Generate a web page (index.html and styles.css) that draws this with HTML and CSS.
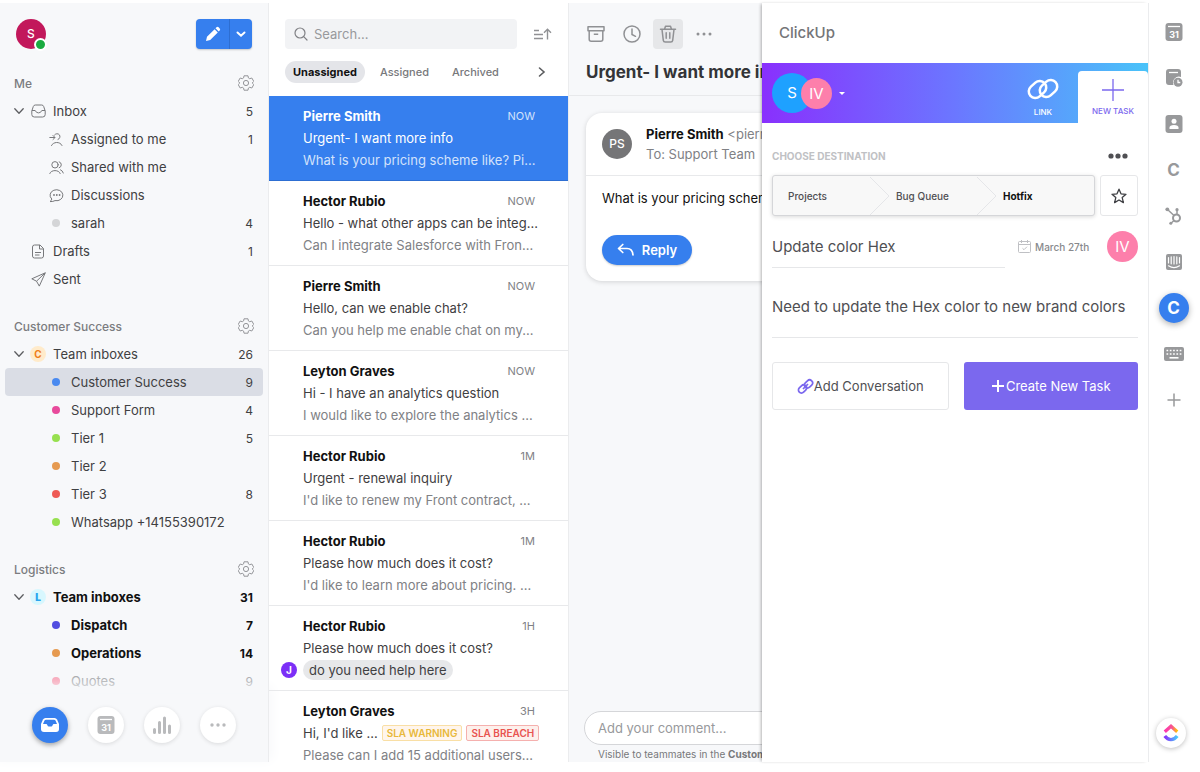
FILE: index.html
```html
<!DOCTYPE html>
<html lang="en">
<head>
    <meta charset="UTF-8">
    <meta name="viewport" content="width=device-width, initial-scale=1.0">
    <title>Customer Success - Inbox</title>
    <link rel="stylesheet" href="styles.css">
</head>
<body>
    <!-- Shared icons -->
    <svg class="sprite" aria-hidden="true">
        <symbol id="gear" viewBox="0 0 16 16">
            <path d="M6 .8h4l.4 2.100 1.300.8 2.100-.7 2 3.400L14.200 8l1.600 1.600-2 3.400-2.100-.7-1.300.8-.4 2.100H6l-.4-2.100-1.300-.8-2.100.7-2-3.400L1.800 8 .2 6.400l2-3.400 2.100.7 1.300-.8z" fill="none" stroke="currentColor" stroke-linejoin="round"/>
            <circle cx="8" cy="8" r="2.600" fill="none" stroke="currentColor"/>
        </symbol>
        <symbol id="chevron" viewBox="0 0 10 10">
            <path d="M.8 2.800L5 7.200l4.200-4.400" fill="none" stroke="currentColor" stroke-width="1.300" stroke-linecap="round" stroke-linejoin="round"/>
        </symbol>
        <symbol id="calendar" viewBox="0 0 18 18">
            <rect x="0.500" y="0" width="17" height="18" rx="3" fill="currentColor"/>
            <path d="M3 3.500h12" stroke="#fff" stroke-width="1.300"/>
            <text x="9" y="14.500" text-anchor="middle" fill="#fff" font-size="9" font-weight="700">31</text>
        </symbol>
    </svg>

    <div class="app">
        <aside class="sidebar">
            <div class="sidebar-top">
                <div class="user">S<span class="status"></span></div>
                <div class="compose">
                    <button type="button" class="compose-new" aria-label="Compose">
                        <svg width="16" height="16" viewBox="0 0 16 16"><path d="M1 15l1-4.200 7.600-7.600 3.200 3.200L5.200 14zM10.500 2.300l1-1a1.500 1.500 0 0 1 2.100 0l1.100 1.100a1.500 1.500 0 0 1 0 2.100l-1 1z" fill="#fff"/></svg>
                    </button>
                    <button type="button" class="compose-more" aria-label="More compose options">
                        <svg width="10" height="10" viewBox="0 0 10 10"><path d="M1.500 3.500L5 6.700l3.500-3.200" fill="none" stroke="#fff" stroke-width="2" stroke-linecap="round"/></svg>
                    </button>
                </div>
            </div>

            <nav class="nav">
                <section class="nav-section">
                    <div class="nav-title">Me <button type="button" aria-label="Settings"><svg width="16" height="16"><use href="#gear"/></svg></button></div>
                    <a class="row" href="#">
                        <svg class="chevron" width="10" height="10"><use href="#chevron"/></svg>
                        <span class="icon"><svg width="15" height="14" viewBox="0 0 15 14" fill="none" stroke="currentColor"><path d="M.8 7L2.300 2.500Q2.800 1 4.300 1h6.400q1.500 0 2 1.500L14.200 7v3.500q0 2.500-2.500 2.500H3.300Q.8 13 .8 10.500zM1 6.500h3.200l1.300 1.800q2 1.200 4 0l1.300-1.800H14"/></svg></span>
                        <span class="label">Inbox</span><span class="count">5</span>
                    </a>
                    <a class="row sub" href="#">
                        <span class="icon"><svg width="15" height="15" viewBox="0 0 15 15" fill="none" stroke="currentColor" stroke-linecap="round"><path d="M5.500 3A3 3 0 1 1 9 7.500M.8 5.500h5M4 3.500l2 2-2 2M2.500 13.500C4 9.800 11 9 13 13.500"/></svg></span>
                        <span class="label">Assigned to me</span><span class="count">1</span>
                    </a>
                    <a class="row sub" href="#">
                        <span class="icon"><svg width="15" height="15" viewBox="0 0 15 15" fill="none" stroke="currentColor" stroke-linecap="round"><circle cx="6" cy="4.800" r="3.200"/><path d="M.8 13.500C2 9.500 10 9.500 11.200 13.500M10.200 1.800a3.200 3.200 0 0 1 0 6M11.500 9.800q2.200.8 2.800 3.200"/></svg></span>
                        <span class="label">Shared with me</span>
                    </a>
                    <a class="row sub" href="#">
                        <span class="icon"><svg width="15" height="15" viewBox="0 0 15 15"><path d="M2.800 11A6.400 5.500 0 1 1 6 12.600Q4 13.800 1 13.600 2.600 12.500 2.800 11z" fill="none" stroke="currentColor" stroke-linejoin="round"/><g fill="currentColor"><circle cx="5" cy="7" r=".9"/><circle cx="7.800" cy="7" r=".9"/><circle cx="10.600" cy="7" r=".9"/></g></svg></span>
                        <span class="label">Discussions</span>
                    </a>
                    <a class="row sub" href="#"><span class="icon"><i class="dot gray"></i></span><span class="label">sarah</span><span class="count">4</span></a>
                    <a class="row no-chevron" href="#">
                        <span class="icon"><svg width="14" height="15" viewBox="0 0 14 15" fill="none" stroke="currentColor" stroke-linejoin="round"><path d="M1.500 3q0-2 2-2H9l3.500 3.500V12q0 2-2 2h-7q-2 0-2-2zM8.500 1v4h4M4 8.500h6M4 11h4.500"/></svg></span>
                        <span class="label">Drafts</span><span class="count">1</span>
                    </a>
                    <a class="row no-chevron" href="#">
                        <span class="icon"><svg width="15" height="15" viewBox="0 0 15 15" fill="none" stroke="currentColor" stroke-linejoin="round"><path d="M14.300.8L.8 6.800l4.700 2.400 2.800 4.900zM14.300.8L5.500 9.200"/></svg></span>
                        <span class="label">Sent</span>
                    </a>
                </section>

                <section class="nav-section">
                    <div class="nav-title">Customer Success <button type="button" aria-label="Settings"><svg width="16" height="16"><use href="#gear"/></svg></button></div>
                    <a class="row" href="#">
                        <svg class="chevron" width="10" height="10"><use href="#chevron"/></svg>
                        <span class="icon"><b class="team orange-team">C</b></span><span class="label">Team inboxes</span><span class="count">26</span>
                    </a>
                    <a class="row sub selected" href="#"><span class="icon"><i class="dot blue"></i></span><span class="label">Customer Success</span><span class="count">9</span></a>
                    <a class="row sub" href="#"><span class="icon"><i class="dot pink"></i></span><span class="label">Support Form</span><span class="count">4</span></a>
                    <a class="row sub" href="#"><span class="icon"><i class="dot green"></i></span><span class="label">Tier 1</span><span class="count">5</span></a>
                    <a class="row sub" href="#"><span class="icon"><i class="dot orange"></i></span><span class="label">Tier 2</span></a>
                    <a class="row sub" href="#"><span class="icon"><i class="dot red"></i></span><span class="label">Tier 3</span><span class="count">8</span></a>
                    <a class="row sub" href="#"><span class="icon"><i class="dot green"></i></span><span class="label">Whatsapp +14155390172</span></a>
                </section>

                <section class="nav-section">
                    <div class="nav-title">Logistics <button type="button" aria-label="Settings"><svg width="16" height="16"><use href="#gear"/></svg></button></div>
                    <a class="row unread" href="#">
                        <svg class="chevron" width="10" height="10"><use href="#chevron"/></svg>
                        <span class="icon"><b class="team cyan-team">L</b></span><span class="label">Team inboxes</span><span class="count">31</span>
                    </a>
                    <a class="row sub unread" href="#"><span class="icon"><i class="dot indigo"></i></span><span class="label">Dispatch</span><span class="count">7</span></a>
                    <a class="row sub unread" href="#"><span class="icon"><i class="dot orange"></i></span><span class="label">Operations</span><span class="count">14</span></a>
                    <a class="row sub faded" href="#"><span class="icon"><i class="dot rose"></i></span><span class="label">Quotes</span><span class="count">9</span></a>
                </section>
            </nav>

            <div class="dock">
                <button type="button" class="active" aria-label="Inbox"><svg width="20" height="16" viewBox="0 0 20 16"><path d="M1 7l2-4.500Q3.800 1 5.500 1h9q1.700 0 2.500 1.500L19 7v5q0 3-3 3H4q-3 0-3-3z" fill="#fff"/><path d="M3 7l1.500-3.500Q5 2.800 6 2.800h8q1 0 1.500.7L17 7h-3.200q-.8 0-1.200 1.300-.4 1.200-1.400 1.200H8.800q-1 0-1.400-1.200Q7 7 6.200 7z" fill="#367fee"/></svg></button>
                <button type="button" aria-label="Calendar"><svg width="18" height="18"><use href="#calendar"/></svg></button>
                <button type="button" aria-label="Analytics"><svg width="20" height="20" viewBox="0 0 20 20" stroke="currentColor" stroke-width="3" stroke-linecap="round"><path d="M2.500 14.500v3M7.500 7.500v10M12.500 3v14.500M17.500 11v6.500"/></svg></button>
                <button type="button" aria-label="More"><svg width="16" height="4" viewBox="0 0 16 4" fill="currentColor"><circle cx="2" cy="2" r="1.700"/><circle cx="8" cy="2" r="1.700"/><circle cx="14" cy="2" r="1.700"/></svg></button>
            </div>
        </aside>

        <section class="list">
            <div class="list-top">
                <div class="search-row">
                    <label class="search">
                        <svg width="14" height="14" viewBox="0 0 14 14" fill="none" stroke="currentColor" stroke-width="1.200" stroke-linecap="round"><circle cx="6" cy="6" r="5"/><path d="M9.700 9.700L13 13"/></svg>
                        <input type="search" placeholder="Search..." aria-label="Search">
                    </label>
                    <button type="button" class="sort" aria-label="Sort"><svg width="18" height="12" viewBox="0 0 18 12" fill="none" stroke="currentColor" stroke-width="1.400"><path d="M0 2.500h5M0 6.500h9M0 10.500h9M13.500 11.500V1.500M10 4.800l3.500-3.500L17 4.800"/></svg></button>
                </div>
                <div class="tabs">
                    <button type="button" class="tab active">Unassigned</button>
                    <button type="button" class="tab">Assigned</button>
                    <button type="button" class="tab">Archived</button>
                    <button type="button" class="next" aria-label="More tabs"><svg width="8" height="12" viewBox="0 0 8 12" fill="none" stroke="currentColor" stroke-width="1.600" stroke-linecap="round"><path d="M1.500 2l4.500 4-4.500 4"/></svg></button>
                </div>
            </div>
            <a class="mail current" href="#">
                <div class="line"><strong>Pierre Smith</strong><time>NOW</time></div>
                <div class="subject">Urgent- I want more info</div>
                <div class="preview">What is your pricing scheme like? Pi...</div>
            </a>
            <a class="mail" href="#">
                <div class="line"><strong>Hector Rubio</strong><time>NOW</time></div>
                <div class="subject">Hello - what other apps can be integ...</div>
                <div class="preview">Can I integrate Salesforce with Fron...</div>
            </a>
            <a class="mail" href="#">
                <div class="line"><strong>Pierre Smith</strong><time>NOW</time></div>
                <div class="subject">Hello, can we enable chat?</div>
                <div class="preview">Can you help me enable chat on my...</div>
            </a>
            <a class="mail" href="#">
                <div class="line"><strong>Leyton Graves</strong><time>NOW</time></div>
                <div class="subject">Hi - I have an analytics question</div>
                <div class="preview">I would like to explore the analytics ...</div>
            </a>
            <a class="mail" href="#">
                <div class="line"><strong>Hector Rubio</strong><time>1M</time></div>
                <div class="subject">Urgent - renewal inquiry</div>
                <div class="preview">I'd like to renew my Front contract, ...</div>
            </a>
            <a class="mail" href="#">
                <div class="line"><strong>Hector Rubio</strong><time>1M</time></div>
                <div class="subject">Please how much does it cost?</div>
                <div class="preview">I'd like to learn more about pricing. ...</div>
            </a>
            <a class="mail" href="#">
                <div class="line"><strong>Hector Rubio</strong><time>1H</time></div>
                <div class="subject">Please how much does it cost?</div>
                <div class="draft"><b class="author">J</b><span class="bubble">do you need help here</span></div>
            </a>
            <a class="mail" href="#">
                <div class="line"><strong>Leyton Graves</strong><time>3H</time></div>
                <div class="subject tagged">Hi, I'd like ... <span class="tag warning">SLA WARNING</span><span class="tag breach">SLA BREACH</span></div>
                <div class="preview">Please can I add 15 additional users...</div>
            </a>
        </section>

        <main class="thread">
            <header class="thread-top">
                <div class="tools">
                    <button type="button" aria-label="Archive"><svg width="18" height="18" viewBox="0 0 18 18" fill="none" stroke="currentColor" stroke-width="1.500" stroke-linejoin="round"><path d="M1 1.800h16v4H1zM2.200 5.800v8.400q0 2 2 2h9.600q2 0 2-2V5.800M6.800 9.300h4.400"/></svg></button>
                    <button type="button" aria-label="Snooze"><svg width="18" height="18" viewBox="0 0 18 18" fill="none" stroke="currentColor" stroke-width="1.500" stroke-linecap="round"><circle cx="9" cy="9" r="8"/><path d="M9 4v5.500l3.500 1.800"/></svg></button>
                    <button type="button" class="active" aria-label="Delete"><svg width="18" height="18" viewBox="0 0 18 18" fill="none" stroke="currentColor" stroke-width="1.500" stroke-linecap="round" stroke-linejoin="round"><path d="M1.500 4.300h15M5.500 4.300l1-3h5l1 3M3 4.500l1.300 10.800q.2 1.700 2 1.700h5.400q1.800 0 2-1.700L15 4.500M7.200 7.800v5.500M10.800 7.800v5.500"/></svg></button>
                    <button type="button" aria-label="More actions"><svg width="16" height="4" viewBox="0 0 16 4" fill="currentColor"><circle cx="2" cy="2" r="1.500"/><circle cx="8" cy="2" r="1.500"/><circle cx="14" cy="2" r="1.500"/></svg></button>
                </div>
                <h1>Urgent- I want more info</h1>
            </header>
            <article class="message">
                <header class="message-top">
                    <div class="sender">PS</div>
                    <div>
                        <div class="from"><strong>Pierre Smith</strong> &lt;pierre</div>
                        <div class="to">To: Support Team</div>
                    </div>
                </header>
                <div class="message-body">
                    <p>What is your pricing scheme</p>
                    <button type="button" class="reply"><svg width="18" height="14" viewBox="0 0 18 14" fill="none" stroke="#fff" stroke-width="1.700" stroke-linecap="round" stroke-linejoin="round"><path d="M5.800 1.500L1.500 5.500l4.300 4M1.800 5.500H10q5.500 0 6 6.500"/></svg>Reply</button>
                </div>
            </article>
            <footer class="comment">
                <input type="text" placeholder="Add your comment..." aria-label="Comment">
                <p>Visible to teammates in the <strong>Customer</strong></p>
            </footer>
        </main>

        <aside class="panel">
            <h2>ClickUp</h2>
            <div class="banner">
                <div class="people"><span class="space">S</span><span class="member">IV</span><i class="caret"></i></div>
                <button type="button" class="link-tab"><svg width="34" height="26" viewBox="0 0 34 26" fill="none" stroke="#fff" stroke-width="2.500"><rect x="2" y="6" width="19" height="13" rx="6.500" transform="rotate(-42 11.500 12.500)"/><rect x="13" y="5" width="19" height="13" rx="6.500" transform="rotate(-42 22.500 11.500)"/></svg>LINK</button>
                <button type="button" class="new-tab"><svg width="24" height="24" viewBox="0 0 24 24" stroke="#7b68ee" stroke-width="1.300"><path d="M12 1v22M1 12h22"/></svg>NEW TASK</button>
            </div>
            <form class="task">
                <div class="dest-title"><span>CHOOSE DESTINATION</span><button type="button" aria-label="Options"><svg width="20" height="6" viewBox="0 0 20 6" fill="#4f4f53"><circle cx="3" cy="3" r="2.600"/><circle cx="10" cy="3" r="2.600"/><circle cx="17" cy="3" r="2.600"/></svg></button></div>
                <div class="dest">
                    <div class="crumbs">
                        <a href="#">Projects</a>
                        <svg width="20" height="38" viewBox="0 0 20 38"><path d="M0 0l19 19L0 38" fill="none" stroke="#e5e6e9"/></svg>
                        <a href="#">Bug Queue</a>
                        <svg width="20" height="38" viewBox="0 0 20 38"><path d="M0 0l19 19L0 38" fill="none" stroke="#e5e6e9"/></svg>
                        <a class="here" href="#">Hotfix</a>
                    </div>
                    <button type="button" class="star" aria-label="Favorite"><svg width="16" height="16" viewBox="0 0 16 16" fill="none" stroke="#3d3e42" stroke-width="1.300" stroke-linejoin="round"><path d="M8 1.200l2 4.600 5 .5-3.800 3.300 1.200 5L8 12l-4.400 2.600 1.200-5L1 6.300l5-.5z"/></svg></button>
                </div>
                <div class="task-row">
                    <input type="text" class="task-name" value="Update color Hex" aria-label="Task name">
                    <div class="due"><svg width="13" height="13" viewBox="0 0 13 13" fill="none" stroke="#bfc0c4"><rect x=".5" y="1.500" width="12" height="11" rx="1"/><path d="M.5 4.500h12M3.500 0v3M9.500 0v3M4.500 8.300L6 9.700l3-3"/></svg>March 27th</div>
                    <span class="member">IV</span>
                </div>
                <input type="text" class="task-text" value="Need to update the Hex color to new brand colors" aria-label="Description">
                <div class="task-actions">
                    <button type="button" class="add"><svg width="17" height="17" viewBox="0 0 17 17" fill="none" stroke="#7b68ee" stroke-width="1.700"><rect x="1" y="8" width="9" height="6" rx="3" transform="rotate(-45 5.500 11)"/><rect x="7" y="3" width="9" height="6" rx="3" transform="rotate(-45 11.500 6)"/><path d="M6 11l5-5"/></svg>Add Conversation</button>
                    <button type="submit" class="create"><svg width="14" height="14" viewBox="0 0 14 14" stroke="#fff" stroke-width="2"><path d="M7 1v12M1 7h12"/></svg>Create New Task</button>
                </div>
            </form>
        </aside>

        <nav class="rail">
            <button type="button" aria-label="Calendar"><svg width="18" height="18"><use href="#calendar"/></svg></button>
            <button type="button" aria-label="Send later"><svg width="18" height="18" viewBox="0 0 18 18"><path d="M4 0h9q3 0 3 3v5a6 6 0 0 0-7.500 8H4q-3 0-3-3V3q0-3 3-3z" fill="currentColor"/><path d="M4 3.500h9" stroke="#fff" stroke-width="1.300"/><circle cx="13" cy="13.300" r="4.500" fill="currentColor"/><path d="M13 10.800v2.700h2.300" stroke="#fff" stroke-width="1.300" fill="none"/></svg></button>
            <button type="button" aria-label="Contacts"><svg width="18" height="18" viewBox="0 0 18 18"><rect x=".5" width="17" height="18" rx="3" fill="currentColor"/><circle cx="9" cy="6.300" r="2.500" fill="#fff"/><path d="M4.500 14v-1.500q0-2.500 4.500-2.500t4.500 2.500V14z" fill="#fff"/></svg></button>
            <button type="button" class="letter">C</button>
            <button type="button" aria-label="HubSpot"><svg width="18" height="18" viewBox="0 0 18 18" fill="none" stroke="currentColor"><circle cx="11.500" cy="11" r="3.500" stroke-width="2"/><path d="M2.500 2.500l6.500 6M12 7.500V3M9 13.500l-3 2.700" stroke-width="1.500"/><g fill="currentColor" stroke="none"><circle cx="2.300" cy="2.300" r="1.900"/><circle cx="12" cy="2.700" r="1.600"/><circle cx="5.800" cy="16.200" r="1.500"/></g></svg></button>
            <button type="button" aria-label="Intercom"><svg width="18" height="18" viewBox="0 0 18 18" fill="none"><rect x="1" y="1" width="16" height="16" rx="2" fill="currentColor"/><path d="M3.500 4.500v5.500M6.200 3.800v7M9 3.500v7.500M11.800 3.800v7M14.500 4.500v5.500M3.500 12.800q5.500 3.500 11 0" stroke="#fff" stroke-width="1.200" stroke-linecap="round"/></svg></button>
            <button type="button" class="letter active">C</button>
            <button type="button" aria-label="Shortcuts"><svg width="20" height="14" viewBox="0 0 20 14"><rect width="20" height="14" rx="2" fill="currentColor"/><path d="M2.500 3.500h15M2.500 7h15" stroke="#fff" stroke-width="1.600" stroke-dasharray="1.700 1.600"/><path d="M5.500 10.800h9" stroke="#fff" stroke-width="1.600"/></svg></button>
            <button type="button" aria-label="Add app"><svg width="14" height="14" viewBox="0 0 14 14" stroke="currentColor" stroke-width="1.500"><path d="M7 .5v13M.5 7h13"/></svg></button>
            <button type="button" class="badge" aria-label="Open ClickUp">
                <svg width="16" height="20" viewBox="0 0 18 22" fill="none" stroke-width="3.800">
                    <defs>
                        <linearGradient id="up"><stop offset="0" stop-color="#fd35b0"/><stop offset=".6" stop-color="#f7568f"/><stop offset="1" stop-color="#ffc800"/></linearGradient>
                        <linearGradient id="down"><stop offset="0" stop-color="#8930fd"/><stop offset="1" stop-color="#49ccf9"/></linearGradient>
                    </defs>
                    <path d="M2 9.500L9 3.500l7 6" stroke="url(#up)"/>
                    <path d="M2 14.500q3 4 7 4t7-4" stroke="url(#down)"/>
                </svg>
            </button>
        </nav>
    </div>
</body>
</html>
```
FILE: styles.css
```css
* {
    box-sizing: border-box;
}
body {
    margin: 0;
    font-family: Inter, "Liberation Sans", sans-serif;
    font-size: 13px;
    color: #3f4042;
    background-color: #fff;
}
button {
    border: none;
    background: none;
    padding: 0;
    font: inherit;
    color: inherit;
    cursor: pointer;
    display: flex;
    align-items: center;
    justify-content: center;
}
input {
    border: none;
    outline: none;
    background: none;
    padding: 0;
    min-width: 0;
    font: inherit;
    color: inherit;
}
a {
    color: inherit;
    text-decoration: none;
}
svg {
    display: block;
    flex-shrink: 0;
}
.sprite {
    position: absolute;
    width: 0;
    height: 0;
}
.app {
    display: flex;
    height: 100vh;
    padding: 3px 0 10px;
    overflow: hidden;
}

/* Sidebar */
.sidebar {
    width: 268px;
    flex-shrink: 0;
    display: flex;
    flex-direction: column;
    background-color: #f7f8fa;
}
.sidebar-top {
    display: flex;
    justify-content: space-between;
    padding: 16px 16px 20px;
}
.user {
    position: relative;
    width: 30px;
    height: 30px;
    line-height: 30px;
    border-radius: 50%;
    background-color: #c2185b;
    color: #fff;
    font-size: 12px;
    font-weight: 500;
    text-align: center;
}
.status {
    position: absolute;
    right: -1px;
    bottom: -2px;
    width: 13px;
    height: 13px;
    border-radius: 50%;
    border: 2px solid #fff;
    background-color: #1aab40;
}
.compose {
    display: flex;
    height: 30px;
    border-radius: 4px;
    background-color: #367fee;
    box-shadow: 0 1px 2px rgba(0, 0, 0, 0.2);
}
.compose-new {
    width: 34px;
    border-right: 1px solid #2d6ed2;
}
.compose-more {
    width: 22px;
}
.nav {
    flex: 1;
    min-height: 0;
    overflow: hidden;
}
.nav-section {
    margin-bottom: 19px;
}
.nav-title {
    display: flex;
    align-items: center;
    justify-content: space-between;
    height: 28px;
    padding: 0 14px;
    font-size: 12px;
    font-weight: 500;
    color: #7b7c7f;
}
.nav-title button {
    color: #949599;
}
.row {
    display: flex;
    align-items: center;
    height: 28px;
    margin: 0 5px;
    padding: 0 10px 0 9px;
    border-radius: 4px;
}
.row .icon {
    display: flex;
    align-items: center;
    justify-content: center;
    width: 16px;
    margin: 0 7px 0 6px;
    color: #77787b;
}
.row .chevron {
    color: #5c5d60;
}
.row .label {
    flex: 1;
}
.row .count {
    font-size: 12px;
}
.row.no-chevron {
    padding-left: 19px;
}
.row.sub {
    padding-left: 37px;
}
.row.selected {
    background-color: #dadde5;
}
.row.unread {
    color: #111;
    font-weight: 700;
}
.row.faded {
    color: #a9aaad;
}
.dot {
    width: 8px;
    height: 8px;
    border-radius: 50%;
}
.gray { background-color: #d4d5d7; }
.blue { background-color: #4a8af0; }
.pink { background-color: #e84a9c; }
.green { background-color: #97e04f; }
.orange { background-color: #e69a50; }
.red { background-color: #ee5a55; }
.indigo { background-color: #524ee0; }
.rose { background-color: #f8a5b8; }
.team {
    width: 16px;
    height: 16px;
    line-height: 16px;
    border-radius: 50%;
    font-size: 10px;
    text-align: center;
}
.orange-team {
    background-color: #ffebcb;
    color: #ef7f1a;
}
.cyan-team {
    background-color: #d8f7fe;
    color: #2ba5ee;
}
.dock {
    display: flex;
    gap: 20px;
    padding: 11px 32px 19px;
    box-shadow: 0 -6px 12px 4px #f7f8fa;
}
.dock button {
    width: 36px;
    height: 36px;
    border-radius: 50%;
    background-color: #fff;
    color: #b9babc;
    box-shadow: 0 1px 4px rgba(0, 0, 0, 0.12);
}
.dock .active {
    background-color: #367fee;
    box-shadow: 0 2px 5px rgba(0, 0, 0, 0.35);
}

/* Conversation list */
.list {
    width: 301px;
    flex-shrink: 0;
    overflow: hidden;
    border: 1px solid #ebecee;
    border-width: 0 1px;
}
.list-top {
    height: 93px;
    padding: 16px 16px 0;
}
.search-row {
    display: flex;
    align-items: center;
    justify-content: space-between;
}
.search {
    display: flex;
    align-items: center;
    gap: 6px;
    width: 232px;
    height: 30px;
    padding: 0 9px;
    border-radius: 4px;
    background-color: #f2f3f5;
    color: #808185;
}
.search input {
    flex: 1;
}
input::placeholder {
    color: #98999c;
    opacity: 1;
}
.sort {
    color: #909194;
}
.tabs {
    display: flex;
    align-items: center;
    gap: 7px;
    margin-top: 12px;
    font-size: 11px;
    font-weight: 500;
    color: #77787b;
}
.tab {
    height: 22px;
    padding: 0 8px;
    border-radius: 11px;
}
.tab.active {
    background-color: #e4e5e9;
    color: #111;
    font-weight: 700;
}
.next {
    margin: 0 6px 0 auto;
    color: #5c5d60;
}
.mail {
    display: block;
    padding: 9px 33px 9px 34px;
    border-bottom: 1px solid #e8e9eb;
    line-height: 22px;
    white-space: nowrap;
}
.mail .line {
    display: flex;
    justify-content: space-between;
}
.mail strong {
    color: #111;
    font-weight: 700;
}
.mail time {
    font-size: 11px;
    color: #808185;
}
.mail .preview {
    color: #808185;
}
.mail.current,
.mail.current strong {
    color: #fff;
}
.mail.current {
    background-color: #367fee;
    border-color: #2d6ed2;
}
.mail.current time,
.mail.current .preview {
    color: #d3e2fb;
}
.draft {
    display: flex;
    align-items: center;
    gap: 6px;
    height: 22px;
    margin-left: -22px;
}
.author {
    width: 16px;
    height: 16px;
    line-height: 16px;
    border-radius: 50%;
    background-color: #7b2ff7;
    color: #fff;
    font-size: 10px;
    text-align: center;
}
.bubble {
    height: 20px;
    line-height: 20px;
    padding: 0 6px;
    border-radius: 10px;
    background-color: #e7e8ea;
}
.tagged {
    display: flex;
    align-items: center;
    gap: 4px;
    margin-right: -4px;
}
.tag {
    height: 16px;
    line-height: 14px;
    padding: 0 4px;
    border: 1px solid;
    border-radius: 2px;
    font-size: 10px;
    font-weight: 600;
}
.warning {
    color: #e8b83a;
    border-color: #f9dfa5;
    background-color: #fff5ec;
}
.breach {
    color: #e85450;
    border-color: #f5b0ae;
    background-color: #fdf0ec;
}

/* Open conversation */
.thread {
    flex: 1;
    min-width: 0;
    display: flex;
    flex-direction: column;
    overflow: hidden;
    white-space: nowrap;
    background-color: #f7f8fa;
}
.thread-top {
    height: 93px;
    padding: 16px 12px 0;
    border-bottom: 1px solid #e8e9eb;
}
.tools {
    display: flex;
    gap: 6px;
    color: #909194;
}
.tools button {
    width: 30px;
    height: 30px;
    border-radius: 4px;
}
.tools .active {
    background-color: #e6e7e9;
}
h1 {
    margin: 10px 5px 0;
    line-height: 26px;
    font-size: 17px;
    font-weight: 700;
    color: #333437;
}
.message {
    min-width: 400px;
    margin: 17px 17px 0;
    border-radius: 16px;
    background-color: #fff;
    box-shadow: 0 1px 5px rgba(0, 0, 0, 0.15);
}
.message-top {
    display: flex;
    align-items: center;
    gap: 14px;
    height: 63px;
    padding: 0 16px;
    border-bottom: 1px solid #e8e9eb;
    line-height: 20px;
    color: #808185;
}
.sender {
    width: 30px;
    height: 30px;
    line-height: 30px;
    border-radius: 50%;
    background-color: #757577;
    color: #fff;
    font-size: 12px;
    font-weight: 500;
    text-align: center;
}
.message-top strong {
    color: #111;
    font-weight: 700;
}
.message-body {
    padding: 12px 16px 16px;
}
.message-body p {
    margin: 0 0 27px;
    line-height: 20px;
    color: #111;
}
.reply {
    gap: 7px;
    width: 90px;
    height: 30px;
    border-radius: 15px;
    background-color: #367fee;
    color: #fff;
    font-weight: 600;
    box-shadow: 0 1px 2px rgba(0, 0, 0, 0.2);
}
.comment {
    min-width: 400px;
    margin-top: auto;
    padding: 0 15px;
}
.comment input {
    width: 100%;
    height: 34px;
    padding: 0 13px;
    border: 1px solid #d5d6d9;
    border-radius: 17px;
    background-color: #fff;
}
.comment p {
    margin: 2px 14px 0;
    line-height: 15px;
    font-size: 10px;
    color: #77787b;
}

/* ClickUp panel */
.panel {
    width: 386px;
    flex-shrink: 0;
    background-color: #fff;
    box-shadow: -2px 0 3px -1px rgba(0, 0, 0, 0.3);
    z-index: 1;
}
h2 {
    margin: 0;
    padding-left: 17px;
    height: 60px;
    line-height: 60px;
    font-size: 15px;
    font-weight: 500;
    color: #747578;
}
.banner {
    display: flex;
    align-items: flex-end;
    height: 60px;
    background-image: linear-gradient(90deg, #8930fd, #6b77ff 50%, #49c3f9);
    color: #fff;
}
.people {
    flex: 1;
    display: flex;
    align-items: center;
    padding: 0 0 10px 10px;
}
.space {
    width: 40px;
    height: 40px;
    line-height: 40px;
    border-radius: 50%;
    background-color: #1ea1ff;
    font-size: 15px;
    text-align: center;
}
.member {
    width: 31px;
    height: 31px;
    line-height: 31px;
    border-radius: 50%;
    background-color: #fd7fab;
    color: #fff;
    font-size: 15px;
    text-align: center;
}
.people .member {
    margin-left: -11px;
}
.caret {
    margin-left: 7px;
    border: 3px solid transparent;
    border-top-color: #fff;
    border-bottom: none;
}
.link-tab,
.new-tab {
    flex-direction: column;
    width: 70px;
    height: 52px;
    font-size: 8px;
    font-weight: 500;
    gap: 4px;
}
.new-tab {
    border-radius: 4px 4px 0 0;
    background-color: #fff;
    color: #7b68ee;
}
.task {
    padding: 25px 10px 0;
    color: #4f4f53;
}
.dest-title {
    display: flex;
    align-items: center;
    justify-content: space-between;
    height: 16px;
    padding-right: 10px;
    font-size: 10px;
    font-weight: 700;
    color: #c0c1c4;
}
.dest {
    display: flex;
    gap: 5px;
    margin-top: 11px;
}
.crumbs {
    flex: 1;
    display: flex;
    align-items: center;
    height: 41px;
    border: 1px solid #d5d6d9;
    border-radius: 3px;
    background-color: #f8f8f8;
    box-shadow: 0 1px 4px rgba(0, 0, 0, 0.15);
    font-size: 10px;
    font-weight: 500;
}
.crumbs a {
    width: 87px;
    padding-left: 6px;
}
.crumbs a:first-child {
    width: 97px;
    padding-left: 15px;
}
.crumbs .here {
    color: #111;
    font-weight: 700;
}
.star {
    width: 38px;
    border: 1px solid #e6e7e9;
    border-radius: 3px;
}
.task-row {
    display: flex;
    align-items: center;
    margin-top: 9px;
}
.task-name {
    width: 233px;
    height: 43px;
    border-bottom: 1px solid #e6e7e9;
    font-size: 15px;
}
.due {
    flex: 1;
    display: flex;
    align-items: center;
    gap: 4px;
    padding-left: 13px;
    font-size: 10px;
    font-weight: 500;
    color: #88898d;
}
.task-text {
    width: 100%;
    height: 70px;
    padding-top: 8px;
    border-bottom: 1px solid #e6e7e9;
    font-size: 15px;
}
.task-actions {
    display: flex;
    gap: 15px;
    margin-top: 24px;
}
.task-actions button {
    flex: 1;
    height: 48px;
    border-radius: 3px;
}
.add {
    border: 1px solid #e6e7e9;
}
.create {
    gap: 1px;
    background-color: #7b68ee;
    color: #fff;
}

/* App rail */
.rail {
    width: 52px;
    flex-shrink: 0;
    display: flex;
    flex-direction: column;
    align-items: center;
    gap: 16px;
    padding: 14px 2px 14px 0;
    border-left: 1px solid #ebecee;
    background-color: #fff;
    color: #98999b;
    z-index: 1;
}
.rail button {
    width: 30px;
    height: 30px;
    border-radius: 50%;
}
.rail .letter {
    font-size: 17px;
    font-weight: 700;
}
.rail .active {
    background-color: #367fee;
    color: #fff;
    box-shadow: 0 2px 6px rgba(0, 0, 0, 0.3);
}
.rail .badge {
    margin: auto 6px 0 0;
    background-color: #fff;
    box-shadow: 0 1px 5px rgba(0, 0, 0, 0.25);
}
```
